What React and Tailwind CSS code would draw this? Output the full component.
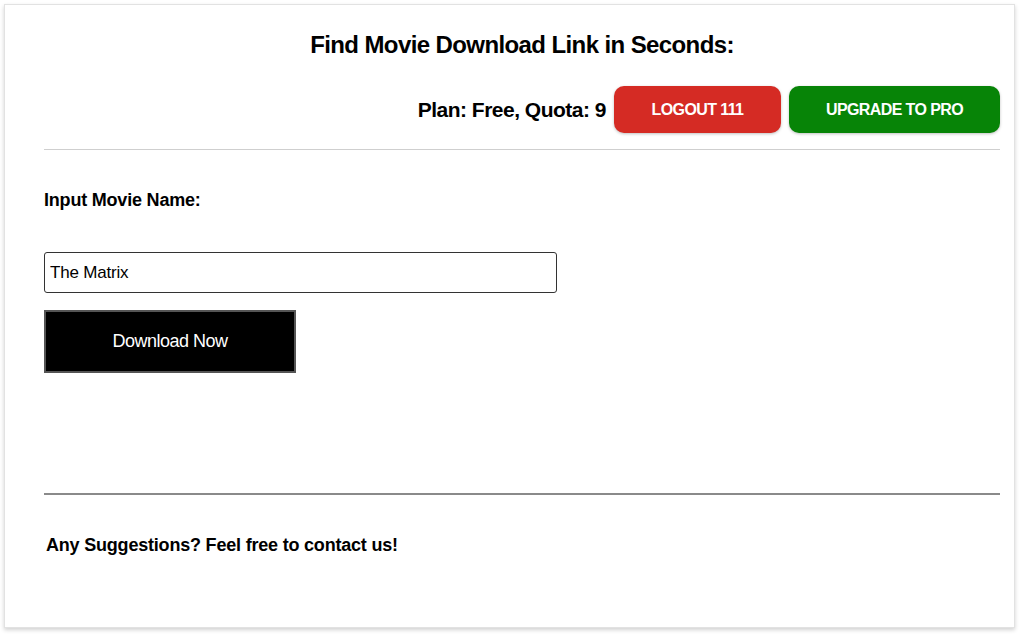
import React, { useState } from "react";

function App() {
    const [movie, setMovie] = useState("The Matrix");

    return (
        <div className="w-[1020px] h-[638px] bg-white p-1 font-['Liberation_Sans',Arial,sans-serif] text-black">
            <div className="h-[624px] w-[1011px] border border-[#e2e2e2] shadow-[0_2px_4px_rgba(0,0,0,0.18)] pl-[39px] pr-[14px] pt-[25px]">
                <header>
                    <h1 className="text-center text-[24px] font-bold leading-[30px] tracking-[-0.6px]">
                        Find Movie Download Link in Seconds:
                    </h1>
                    <div className="mt-[26px] flex items-center justify-end gap-2">
                        <span className="text-[21px] font-bold tracking-[-0.5px]">
                            Plan: Free, Quota: 9
                        </span>
                        <button className="h-[47px] w-[167px] rounded-[10px] bg-[#d52b24] text-[16px] font-bold text-white shadow-[0_1px_3px_rgba(0,0,0,0.25)] tracking-[-0.6px]">
                            LOGOUT 111
                        </button>
                        <button className="h-[47px] w-[211px] rounded-[10px] bg-[#078407] text-[16px] font-bold text-white shadow-[0_1px_3px_rgba(0,0,0,0.25)] tracking-[-0.6px]">
                            UPGRADE TO PRO
                        </button>
                    </div>
                </header>
                <hr className="mt-4 border-t border-[#cfcfcf]" />

                <section className="pt-[40px]">
                    <label className="block text-[18px] font-bold leading-5 tracking-[-0.2px]">
                        Input Movie Name:
                    </label>
                    <input
                        className="mt-[42px] block h-[41px] w-[513px] rounded-[3px] border-[1.5px] border-[#333] px-[5px] text-[17px] tracking-[-0.2px] outline-none"
                        value={movie}
                        onChange={(e) => setMovie(e.target.value)}
                    />
                    <button className="mt-[17px] block h-[63px] w-[252px] border-2 border-[#555] bg-black text-[18px] text-white tracking-[-0.5px]">
                        Download Now
                    </button>
                </section>

                <hr className="mt-[120px] border-t-2 border-[#8a8a8a]" />
                <p className="mt-[37px] pl-[2px] text-[18px] font-bold tracking-[-0.2px]">
                    Any Suggestions? Feel free to contact us!
                </p>
            </div>
        </div>
    );
}

export default App;
